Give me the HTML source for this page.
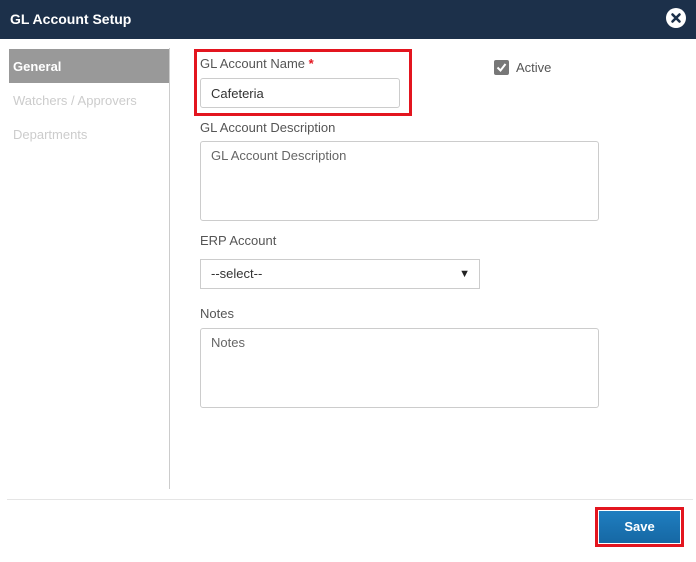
<!DOCTYPE html>
<html><head><style>
*{box-sizing:border-box;margin:0;padding:0}
body{width:696px;height:562px;background:#fff;font-family:"Liberation Sans",sans-serif;position:relative;overflow:hidden;color:#555}
.hdr{position:absolute;left:0;top:0;width:696px;height:39px;background:#1c304a;color:#fff;font-weight:bold;font-size:14px;padding:11px 10px}
.close{position:absolute;left:666px;top:8px;width:20px;height:20px;border-radius:50%;background:#fff}
.side{position:absolute;left:169px;top:48px;width:1px;height:441px;background:#ccc}
.nav{position:absolute;left:13px;font-size:13px;color:#ccc}
.a{position:absolute;font-size:13px;color:#555}
.box{position:absolute;border:1px solid #ccc;border-radius:3px;font-size:13px;color:#666;padding:0 10px}
.red{position:absolute;border:3px solid #e3151f}
</style></head><body>
<div class="hdr">GL Account Setup</div>
<div class="close"><svg width="20" height="20"><path d="M6.5 6.5L13.5 13.5M13.5 6.5L6.5 13.5" stroke="#1c304a" stroke-width="2.6" stroke-linecap="round"/></svg></div>
<div style="position:absolute;left:9px;top:49px;width:160px;height:34px;background:#999"></div>
<div class="nav" style="top:59px;color:#fff;font-weight:bold">General</div>
<div class="nav" style="top:93px">Watchers / Approvers</div>
<div class="nav" style="top:127px">Departments</div>
<div class="side"></div>
<div class="red" style="left:194px;top:49px;width:218px;height:67px"></div>
<div class="a" style="left:200px;top:56px">GL Account Name <span style="color:#e3151f;font-weight:bold">*</span></div>
<div class="box" style="left:200px;top:78px;width:200px;height:30px;line-height:30px;color:#333">Cafeteria</div>
<div style="position:absolute;left:494px;top:60px;width:15px;height:15px;background:#777;border-radius:2px"><svg width="15" height="15"><path d="M3.5 7.5L6.5 10.5L11.5 4" stroke="#fff" stroke-width="2" fill="none"/></svg></div>
<div class="a" style="left:516px;top:60px">Active</div>
<div class="a" style="left:200px;top:120px">GL Account Description</div>
<div class="box" style="left:200px;top:141px;width:399px;height:80px;padding-top:6px">GL Account Description</div>
<div class="a" style="left:200px;top:233px">ERP Account</div>
<div class="box" style="left:200px;top:259px;width:280px;height:30px;line-height:28px;color:#333;border-radius:0">--select--<span style="position:absolute;right:9px;top:0;font-size:11px;color:#222">▼</span></div>
<div class="a" style="left:200px;top:306px">Notes</div>
<div class="box" style="left:200px;top:328px;width:399px;height:80px;padding-top:6px">Notes</div>
<div style="position:absolute;left:7px;top:499px;width:686px;height:1px;background:#e5e5e5"></div>
<div class="red" style="left:595px;top:507px;width:89px;height:40px"></div>
<div style="position:absolute;left:599px;top:511px;width:81px;height:32px;background:linear-gradient(#1f7ec0,#1668a4);color:#fff;font-weight:bold;font-size:13px;text-align:center;line-height:32px">Save</div>
</body></html>
